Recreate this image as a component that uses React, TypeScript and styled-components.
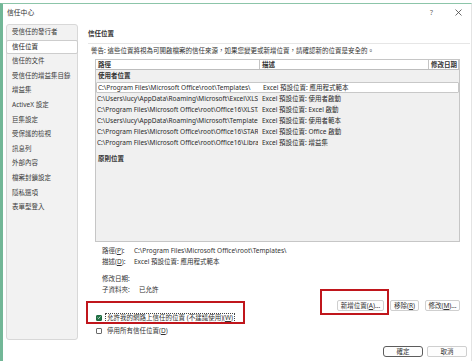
import styled, { createGlobalStyle } from "styled-components";

const GlobalStyle = createGlobalStyle`
  html, body {
    margin: 0;
    padding: 0;
    background: #ffffff;
  }
  body {
    font-family: "Noto Sans", "Noto Sans CJK TC", sans-serif;
    font-size: 6.5px;
    color: #262626;
  }
  * {
    box-sizing: border-box;
  }
`;

const Dialog = styled.div`
  width: 472px;
  height: 358px;
  margin-top: 3px;
  border-left: 3px solid #72b797;
  border-top: 1px solid #8cc5a9;
  border-right: 1px solid #e4e4e4;
  background: #ffffff;
  display: flex;
  flex-direction: column;
`;

const TitleBar = styled.div`
  height: 20px;
  padding: 0 9px 4px 4px;
  display: flex;
  align-items: center;
  font-size: 6.8px;
  color: #303030;
`;

const TitleControls = styled.div`
  margin-left: auto;
  display: flex;
  align-items: center;
  gap: 22px;
  color: #666;
`;

const Body = styled.div`
  display: flex;
  height: 316px;
`;

const Nav = styled.div`
  margin-left: 3px;
  width: 72px;
  height: 100%;
  border: 1px solid #d8d8d8;
  border-radius: 3px;
  background: #f2f2f2;
  display: flex;
  flex-direction: column;
`;

const NavItem = styled.div<{ $active?: boolean }>`
  height: 14.6px;
  line-height: ${(p) => (p.$active ? "12.6px" : "14.6px")};
  padding-left: 5px;
  white-space: nowrap;
  color: #3a3a3a;
  ${(p) =>
    p.$active &&
    `
    margin: 0 -1px;
    background: #ffffff;
    border: 1px solid #cdcdcd;
    border-radius: 2px;
    color: #222;
  `}
`;

const Main = styled.div`
  flex: 1;
  padding: 0 11px 0 10px;
  display: flex;
  flex-direction: column;
`;

const Heading = styled.div`
  height: 20px;
  line-height: 20px;
  margin-right: -10px;
  border-bottom: 1px solid #e6e6e6;
  font-weight: 700;
  color: #333;
`;

const Warning = styled.div`
  margin-top: 2px;
  line-height: 10px;
  padding-left: 3px;
  white-space: nowrap;
  color: #333;
`;

const Table = styled.div`
  margin: 3px 0 0 7px;
  height: 183px;
  border: 1px solid #c6c6c6;
  background: #f0f0f0;
  display: flex;
  flex-direction: column;
  overflow: hidden;
`;

const COLS = "164px 169px 1fr";

const HeaderRow = styled.div`
  display: grid;
  grid-template-columns: ${COLS};
  height: 10px;
  background: #ffffff;
  border-bottom: 1px solid #bdbdbd;
`;

const HeaderCell = styled.div`
  line-height: 9px;
  padding-left: 2px;
  font-weight: 700;
  white-space: nowrap;
  overflow: hidden;
  border-right: 1px solid #c4c4c4;
  color: #333;
`;

const GroupLabel = styled.div<{ $gap?: number }>`
  height: 12px;
  line-height: 12px;
  margin-top: ${(p) => p.$gap ?? 0}px;
  padding-left: 2px;
  font-weight: 700;
  color: #333;
`;

const Row = styled.div<{ $selected?: boolean }>`
  display: grid;
  grid-template-columns: ${COLS};
  height: 11px;
  line-height: ${(p) => (p.$selected ? "9px" : "11px")};
  white-space: nowrap;
  color: #2a2a2a;
  ${(p) =>
    p.$selected &&
    `
    background: #ffffff;
    border: 1px solid #c8c8c8;
    border-radius: 1px;
  `}
`;

const Cell = styled.div<{ $pad?: number }>`
  min-width: 0;
  overflow: hidden;
  padding-left: ${(p) => p.$pad ?? 1}px;
  padding-right: 2px;
`;

const Clip = styled.span`
  display: block;
  overflow: hidden;
`;

const Details = styled.div`
  margin-top: 3px;
  padding-left: 14px;
  display: flex;
  flex-direction: column;
`;

const DetailRow = styled.div<{ $label: number; $gap?: number }>`
  display: grid;
  grid-template-columns: ${(p) => p.$label}px 1fr;
  height: 11px;
  line-height: 11px;
  margin-top: ${(p) => p.$gap ?? 0}px;
  white-space: nowrap;
  color: #333;
`;

const ButtonRow = styled.div`
  margin-top: 5px;
  display: flex;
  justify-content: flex-end;
  align-items: center;
  gap: 6px;
`;

const Anchor = styled.div`
  position: relative;
  display: flex;
`;

const Highlight = styled.div<{
  $top: number;
  $left: number;
  $width: number;
  $height: number;
}>`
  position: absolute;
  top: ${(p) => p.$top}px;
  left: ${(p) => p.$left}px;
  width: ${(p) => p.$width}px;
  height: ${(p) => p.$height}px;
  border: 2px solid #c0161c;
  pointer-events: none;
`;

const Button = styled.div<{ $w: number; $primary?: boolean }>`
  width: ${(p) => p.$w}px;
  height: 11px;
  line-height: 9px;
  text-align: center;
  white-space: nowrap;
  background: #fdfdfd;
  border: 1px solid ${(p) => (p.$primary ? "#5c5c5c" : "#cfcfcf")};
  border-radius: ${(p) => (p.$primary ? 3 : 2)}px;
  color: #333;
`;

const Key = styled.span`
  text-decoration: underline;
`;

const CheckRow = styled.div`
  position: relative;
  height: 13px;
  padding-left: 8px;
  display: flex;
  align-items: center;
  gap: 2px;
  white-space: nowrap;
  color: #333;
`;

const Box = styled.div<{ $checked?: boolean }>`
  width: 6px;
  height: 6px;
  border-radius: 1px;
  border: 1px solid ${(p) => (p.$checked ? "#1e6b40" : "#6a6a6a")};
  background: ${(p) => (p.$checked ? "#217346" : "#ffffff")};
  display: flex;
  align-items: center;
  justify-content: center;
  margin-right: 1px;
`;

const FocusLabel = styled.span<{ $focused?: boolean }>`
  display: inline-block;
  line-height: 8px;
  padding: 0 1px;
  border: 1px dotted ${(p) => (p.$focused ? "#444" : "transparent")};
`;

const Footer = styled.div`
  margin-top: 6px;
  padding-right: 4px;
  display: flex;
  justify-content: flex-end;
  gap: 4px;
`;

const navItems = [
  "受信任的發行者",
  "信任位置",
  "信任的文件",
  "受信任的增益集目錄",
  "增益集",
  "ActiveX 設定",
  "巨集設定",
  "受保護的檢視",
  "訊息列",
  "外部內容",
  "檔案封鎖設定",
  "隱私選項",
  "表單型登入",
];

const locations = [
  ["C:\\Program Files\\Microsoft Office\\root\\Templates\\", "Excel 預設位置: 應用程式範本"],
  ["C:\\Users\\lucy\\AppData\\Roaming\\Microsoft\\Excel\\XLSTART\\", "Excel 預設位置: 使用者啟動"],
  ["C:\\Program Files\\Microsoft Office\\root\\Office16\\XLSTART\\", "Excel 預設位置: Excel 啟動"],
  ["C:\\Users\\lucy\\AppData\\Roaming\\Microsoft\\Templates\\", "Excel 預設位置: 使用者範本"],
  ["C:\\Program Files\\Microsoft Office\\root\\Office16\\STARTUP\\", "Excel 預設位置: Office 啟動"],
  ["C:\\Program Files\\Microsoft Office\\root\\Office16\\Library\\", "Excel 預設位置: 增益集"],
];

function CloseIcon() {
  return (
    <svg width="7" height="7" viewBox="0 0 7 7">
      <path d="M0.5 0.5 L6.5 6.5 M6.5 0.5 L0.5 6.5" stroke="#444" strokeWidth="0.8" />
    </svg>
  );
}

function CheckMark() {
  return (
    <svg width="5" height="5" viewBox="0 0 5 5">
      <path d="M0.8 2.6 L2 3.8 L4.3 1.2" stroke="#fff" strokeWidth="0.9" fill="none" />
    </svg>
  );
}

export default function App() {
  return (
    <>
      <GlobalStyle />
      <Dialog>
        <TitleBar>
          信任中心
          <TitleControls>
            <span>?</span>
            <CloseIcon />
          </TitleControls>
        </TitleBar>
        <Body>
          <Nav>
            {navItems.map((item) => (
              <NavItem key={item} $active={item === "信任位置"}>
                {item}
              </NavItem>
            ))}
          </Nav>
          <Main>
            <Heading>信任位置</Heading>
            <Warning>
              警告: 這些位置將視為可開啟檔案的信任來源，如果您變更或新增位置，請確認新的位置是安全的。
            </Warning>
            <Table>
              <HeaderRow>
                <HeaderCell>路徑</HeaderCell>
                <HeaderCell>描述</HeaderCell>
                <HeaderCell>修改日期</HeaderCell>
              </HeaderRow>
              <GroupLabel>使用者位置</GroupLabel>
              {locations.map(([path, desc], i) => (
                <Row key={path} $selected={i === 0}>
                  <Cell>
                    <Clip>{path}</Clip>
                  </Cell>
                  <Cell $pad={2}>
                    <Clip>{desc}</Clip>
                  </Cell>
                  <Cell />
                </Row>
              ))}
              <GroupLabel $gap={5}>原則位置</GroupLabel>
            </Table>
            <Details>
              <DetailRow $label={32}>
                <span>
                  路徑(<Key>P</Key>):
                </span>
                <span>C:\Program Files\Microsoft Office\root\Templates\</span>
              </DetailRow>
              <DetailRow $label={32}>
                <span>
                  描述(<Key>D</Key>):
                </span>
                <span>Excel 預設位置: 應用程式範本</span>
              </DetailRow>
              <DetailRow $label={37} $gap={6}>
                <span>修改日期:</span>
                <span />
              </DetailRow>
              <DetailRow $label={37}>
                <span>子資料夾:</span>
                <span>已允許</span>
              </DetailRow>
            </Details>
            <ButtonRow>
              <Anchor>
                <Button $w={47}>
                  新增位置(<Key>A</Key>)...
                </Button>
                <Highlight $top={-11} $left={-17} $width={69} $height={26} />
              </Anchor>
              <Button $w={29}>
                移除(<Key>R</Key>)
              </Button>
              <Button $w={35}>
                修改(<Key>M</Key>)...
              </Button>
            </ButtonRow>
            <CheckRow>
              <Box $checked>
                <CheckMark />
              </Box>
              <FocusLabel $focused>
                允許我的網路上信任的位置 (不建議使用)(<Key>W</Key>)
              </FocusLabel>
              <Highlight $top={-10} $left={-2} $width={159} $height={23} />
            </CheckRow>
            <CheckRow>
              <Box />
              <FocusLabel>
                停用所有信任位置(<Key>D</Key>)
              </FocusLabel>
            </CheckRow>
          </Main>
        </Body>
        <Footer>
          <Button $w={40} $primary>
            確定
          </Button>
          <Button $w={40}>取消</Button>
        </Footer>
      </Dialog>
    </>
  );
}
